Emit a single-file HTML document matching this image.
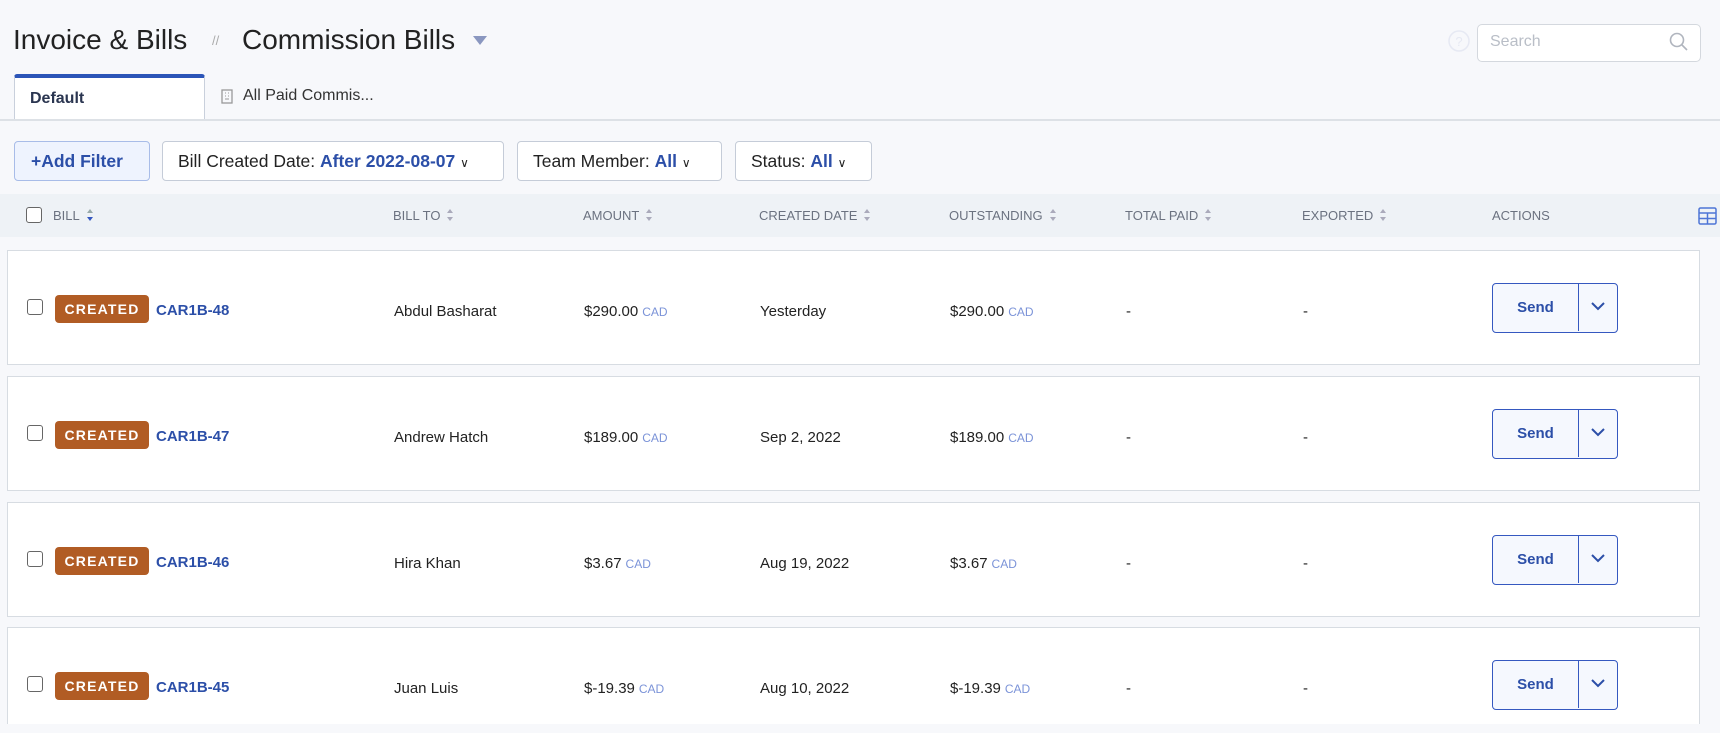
<!DOCTYPE html>
<html><head><meta charset="utf-8"><style>
*{box-sizing:border-box;margin:0;padding:0}
body{width:1720px;height:733px;background:#f7f8fb;font-family:"Liberation Sans",sans-serif;position:relative;overflow:hidden;color:#222}
.a{position:absolute;white-space:nowrap}
.title{font-size:28px;color:#222;top:24px}
.tab{position:absolute;left:14px;top:74px;width:191px;height:47px;background:#fff;border:1px solid #c9d0dc;border-top:4px solid #2c55b8;border-bottom:none;border-radius:3px 3px 0 0;font-weight:bold;font-size:16px;color:#2a3550;padding:12px 0 0 15px}
.line{position:absolute;left:0;top:119px;width:1720px;height:2px;background:#dde1e6}
.f{position:absolute;top:141px;height:40px;background:#fff;border:1px solid #c5ccd8;border-radius:4px;font-size:17.5px;color:#222;padding:9px 0 0 15px}
.f b{color:#2c4fa8}
.hdr{position:absolute;left:0;top:194px;width:1720px;height:43px;background:#eef2f6}
.h{position:absolute;top:208px;font-size:13px;color:#6b7280;white-space:nowrap}
.s{display:inline-block;width:8px;height:12px;vertical-align:-1px;margin-left:6px}
.row{position:absolute;left:7px;width:1693px;height:115px;background:#fff;border:1px solid #d7dce2}
.c{position:absolute;top:52px;font-size:15px;color:#222;white-space:nowrap}
.cad{color:#7b93d8;font-size:12px;margin-left:4px}
.cb{position:absolute;left:19px;top:48px;width:16px;height:16px;border:1.5px solid #666;border-radius:3px;background:#fff}
.badge{position:absolute;left:47px;top:44px;width:94px;height:28px;background:#b15c24;border-radius:4px;color:#fff;font-weight:bold;font-size:14px;letter-spacing:1.2px;text-align:center;line-height:28px}
.id{position:absolute;left:148px;top:51px;font-weight:bold;color:#2c4fa8;font-size:15px}
.send{position:absolute;left:1484px;top:32px;width:126px;height:50px;border:1.5px solid #3558c0;border-radius:4px;background:#f5f8fe}
.send span{position:absolute;left:0;top:0;width:86px;height:47px;line-height:47px;text-align:center;font-weight:bold;color:#2c4fa8;font-size:15px;border-right:1.5px solid #3558c0}
.send svg{position:absolute;left:98px;top:18px}
</style></head><body>
<div class="a title" style="left:13px">Invoice &amp; Bills</div>
<div class="a" style="left:212px;top:33px;font-size:13px;color:#aaa">//</div>
<div class="a title" style="left:242px">Commission Bills</div>
<svg class="a" style="left:473px;top:36px" width="14" height="9"><path d="M0 0h14L7 9z" fill="#8a97c0"/></svg>
<svg class="a" style="left:1448px;top:30px" width="22" height="22"><circle cx="11" cy="11" r="10" fill="none" stroke="#e6e9f3" stroke-width="1.5"/><text x="11" y="16" font-size="13" text-anchor="middle" fill="#e6e9f3" font-family="Liberation Sans">?</text></svg>
<div class="a" style="left:1477px;top:24px;width:224px;height:38px;background:#fff;border:1.5px solid #d4d8de;border-radius:5px"></div>
<div class="a" style="left:1490px;top:33px;font-size:16px;color:#b9bec7">Search</div>
<svg class="a" style="left:1669px;top:32px" width="20" height="20"><circle cx="8" cy="8" r="6.5" fill="none" stroke="#b0b5be" stroke-width="1.6"/><path d="M13 13l5 5" stroke="#b0b5be" stroke-width="1.6"/></svg>
<div class="tab">Default</div>
<svg class="a" style="left:221px;top:89px" width="12" height="15"><rect x="1" y="1" width="10" height="13" fill="none" stroke="#999" stroke-width="1.3"/><path d="M4 4h1M7 4h1M4 7h1M7 7h1M4 10h4" stroke="#999"/></svg>
<div class="a" style="left:243px;top:87px;font-size:16px;color:#333">All Paid Commis...</div>
<div class="line"></div>
<div class="f" style="left:14px;width:136px;background:#eef3fe;border-color:#a8bce8;color:#2c4fa8;font-weight:bold;padding-left:16px">+Add Filter</div>
<div class="f" style="left:162px;width:342px">Bill Created Date: <b>After 2022-08-07</b> <span style="font-size:12px">&#8744;</span></div>
<div class="f" style="left:517px;width:205px">Team Member: <b>All</b> <span style="font-size:12px">&#8744;</span></div>
<div class="f" style="left:735px;width:137px">Status: <b>All</b> <span style="font-size:12px">&#8744;</span></div>
<div class="hdr"></div>
<div class="a" style="left:26px;top:207px;width:16px;height:16px;border:1.5px solid #666;border-radius:3px;background:#fff"></div>
<div class="h" style="left:53px">BILL<svg class="s"><path d="M4 0l3 4H1z" fill="#9aa"/><path d="M4 12l3-4H1z" fill="#3558c0"/></svg></div>
<div class="h" style="left:393px">BILL TO<svg class="s"><path d="M4 0l3 4H1zM4 12l3-4H1z" fill="#aab"/></svg></div>
<div class="h" style="left:583px">AMOUNT<svg class="s"><path d="M4 0l3 4H1zM4 12l3-4H1z" fill="#aab"/></svg></div>
<div class="h" style="left:759px">CREATED DATE<svg class="s"><path d="M4 0l3 4H1zM4 12l3-4H1z" fill="#aab"/></svg></div>
<div class="h" style="left:949px">OUTSTANDING<svg class="s"><path d="M4 0l3 4H1zM4 12l3-4H1z" fill="#aab"/></svg></div>
<div class="h" style="left:1125px">TOTAL PAID<svg class="s"><path d="M4 0l3 4H1zM4 12l3-4H1z" fill="#aab"/></svg></div>
<div class="h" style="left:1302px">EXPORTED<svg class="s"><path d="M4 0l3 4H1zM4 12l3-4H1z" fill="#aab"/></svg></div>
<div class="h" style="left:1492px">ACTIONS</div>
<svg class="a" style="left:1698px;top:207px" width="19" height="18"><rect x="1" y="1" width="17" height="16" rx="1.5" fill="none" stroke="#4d74d6" stroke-width="1.5"/><path d="M1 6h17M1 11.5h17M9.5 6v11" stroke="#4d74d6" stroke-width="1.5"/></svg>

<div class="row" style="top:250px"><div class="cb"></div><div class="badge">CREATED</div><div class="id">CAR1B-48</div><div class="c" style="left:386px">Abdul Basharat</div><div class="c" style="left:576px">$290.00<span class="cad">CAD</span></div><div class="c" style="left:752px">Yesterday</div><div class="c" style="left:942px">$290.00<span class="cad">CAD</span></div><div class="c" style="left:1118px">-</div><div class="c" style="left:1295px">-</div><div class="send"><span>Send</span><svg width="14" height="9"><path d="M1 1l6 6 6-6" fill="none" stroke="#2c4fa8" stroke-width="2"/></svg></div></div>
<div class="row" style="top:376px"><div class="cb"></div><div class="badge">CREATED</div><div class="id">CAR1B-47</div><div class="c" style="left:386px">Andrew Hatch</div><div class="c" style="left:576px">$189.00<span class="cad">CAD</span></div><div class="c" style="left:752px">Sep 2, 2022</div><div class="c" style="left:942px">$189.00<span class="cad">CAD</span></div><div class="c" style="left:1118px">-</div><div class="c" style="left:1295px">-</div><div class="send"><span>Send</span><svg width="14" height="9"><path d="M1 1l6 6 6-6" fill="none" stroke="#2c4fa8" stroke-width="2"/></svg></div></div>
<div class="row" style="top:502px"><div class="cb"></div><div class="badge">CREATED</div><div class="id">CAR1B-46</div><div class="c" style="left:386px">Hira Khan</div><div class="c" style="left:576px">$3.67<span class="cad">CAD</span></div><div class="c" style="left:752px">Aug 19, 2022</div><div class="c" style="left:942px">$3.67<span class="cad">CAD</span></div><div class="c" style="left:1118px">-</div><div class="c" style="left:1295px">-</div><div class="send"><span>Send</span><svg width="14" height="9"><path d="M1 1l6 6 6-6" fill="none" stroke="#2c4fa8" stroke-width="2"/></svg></div></div>
<div class="row" style="top:627px;height:97px;border-bottom:none"><div class="cb"></div><div class="badge">CREATED</div><div class="id">CAR1B-45</div><div class="c" style="left:386px">Juan Luis</div><div class="c" style="left:576px">$-19.39<span class="cad">CAD</span></div><div class="c" style="left:752px">Aug 10, 2022</div><div class="c" style="left:942px">$-19.39<span class="cad">CAD</span></div><div class="c" style="left:1118px">-</div><div class="c" style="left:1295px">-</div><div class="send"><span>Send</span><svg width="14" height="9"><path d="M1 1l6 6 6-6" fill="none" stroke="#2c4fa8" stroke-width="2"/></svg></div></div>
</body></html>
